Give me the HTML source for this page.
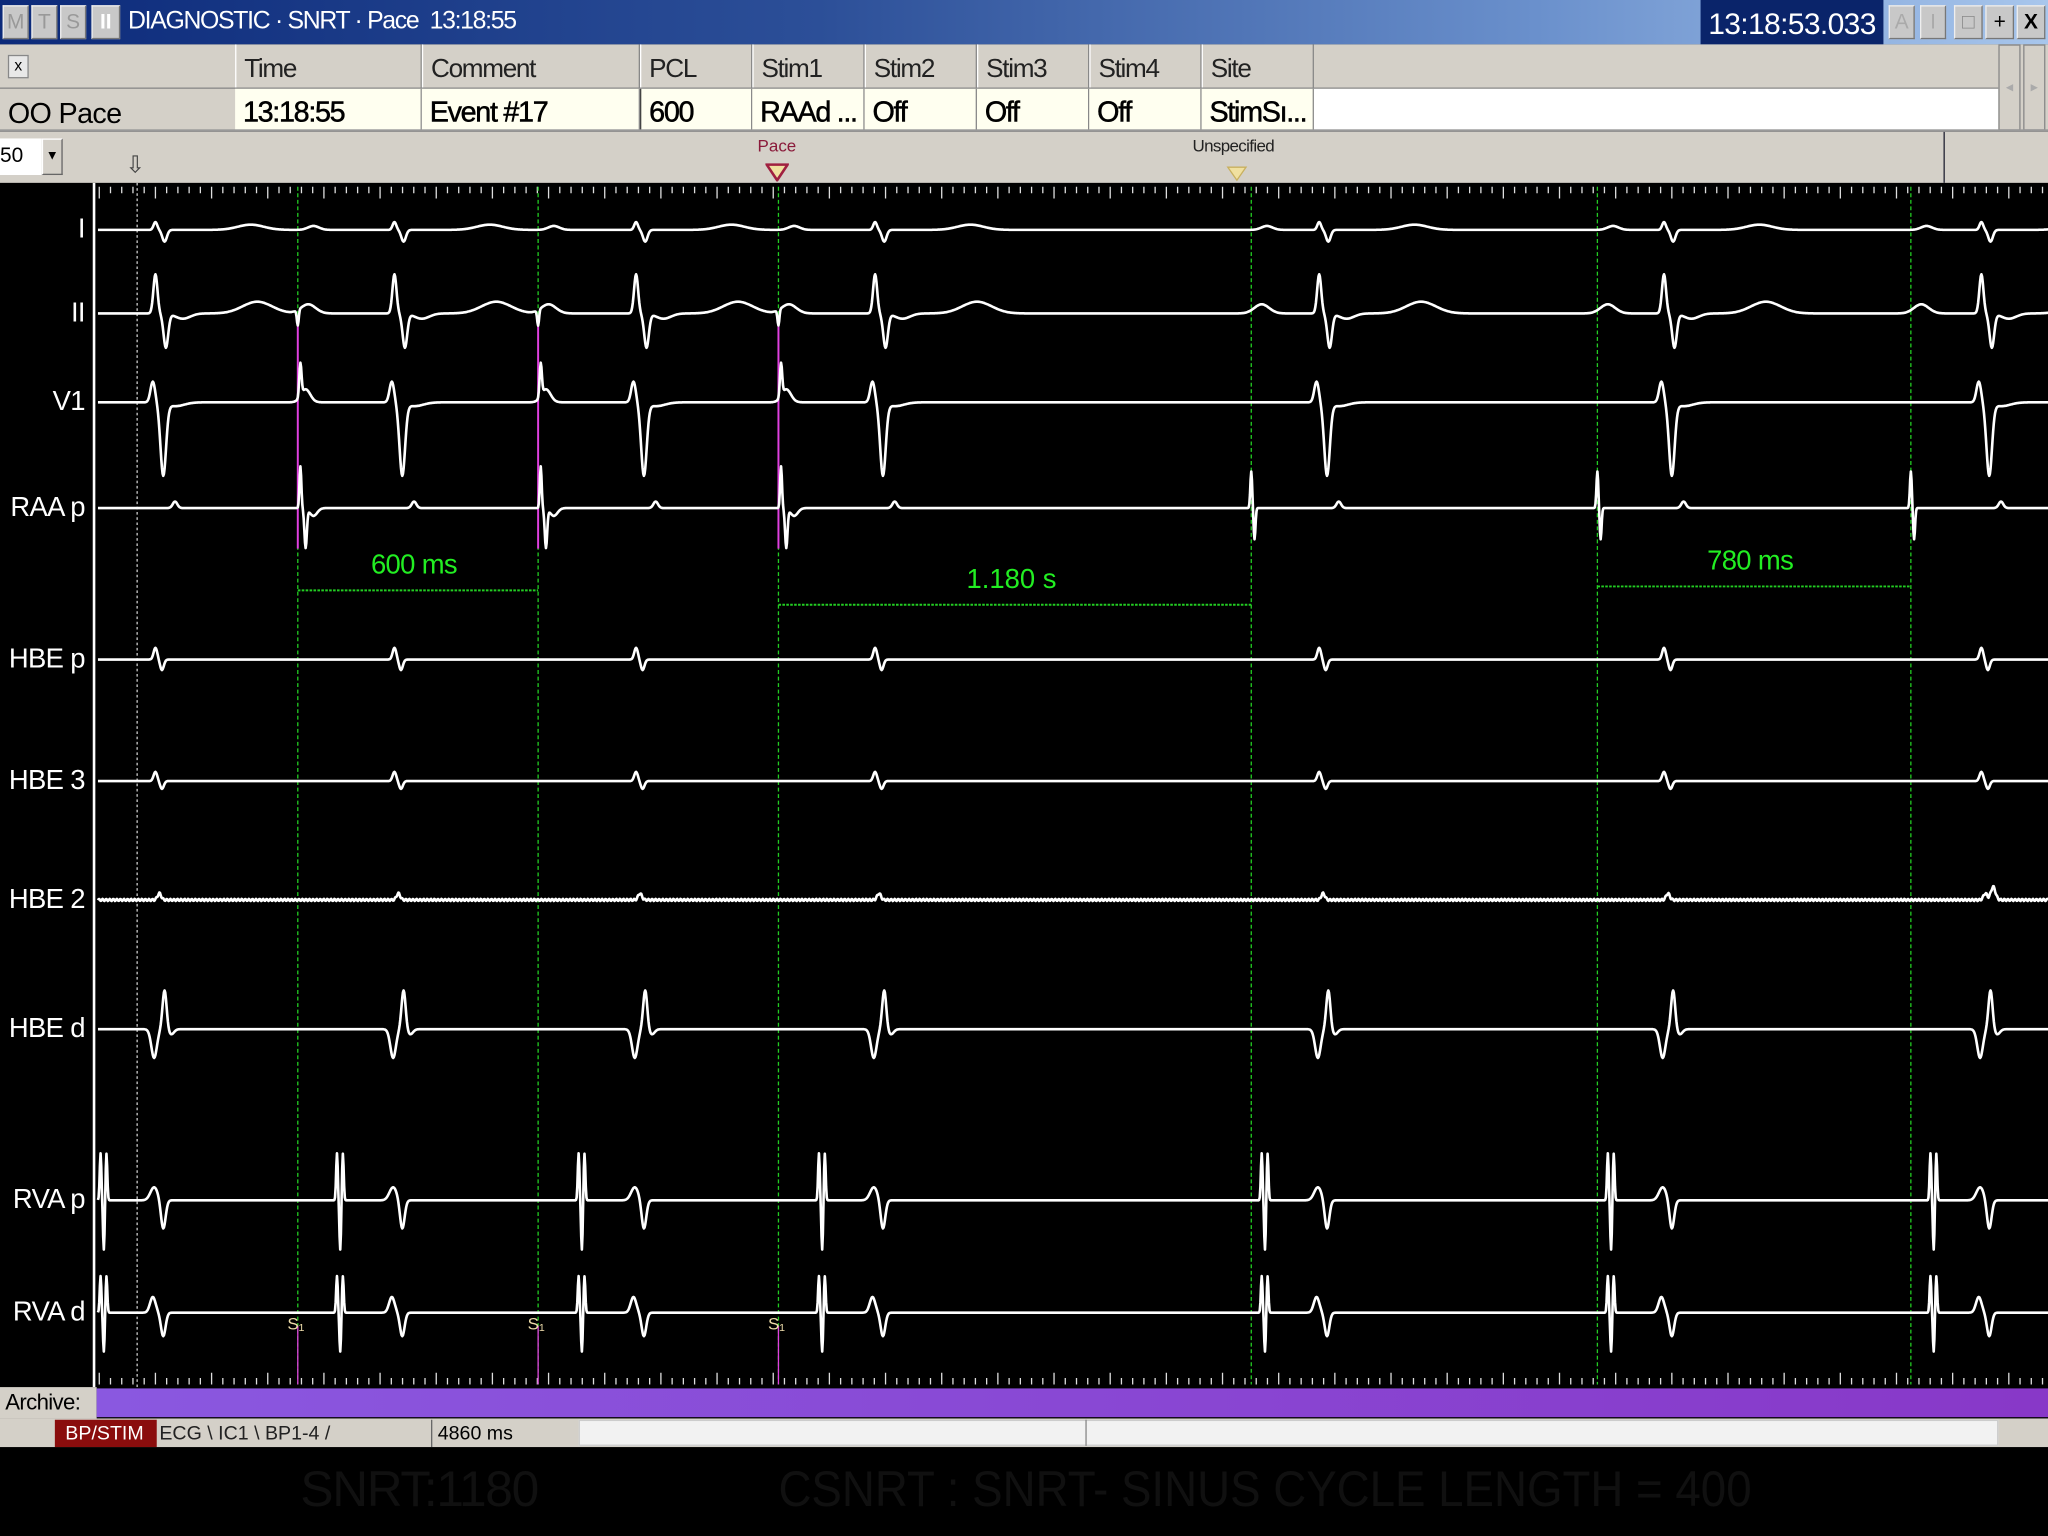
<!DOCTYPE html>
<html><head><meta charset="utf-8"><style>
html,body{margin:0;padding:0;background:#000;overflow:hidden}
#w{position:absolute;left:0;top:0;width:1568px;height:1176px;transform:scale(1.306122);transform-origin:0 0;font-family:"Liberation Sans",sans-serif;background:#000}
.a{position:absolute}
.g{background:#d4d0c8}
.btn{position:absolute;top:4px;height:26px;background:#c8c8c8;border:1px solid #eee;border-right-color:#777;border-bottom-color:#777;color:#999;font-size:16px;text-align:center;line-height:26px;box-sizing:border-box}
.hc{position:absolute;top:34px;height:34px;border-left:1px solid #fff;border-right:1px solid #888;box-sizing:border-box;font-size:20px;color:#222;padding-left:6px;line-height:38px;letter-spacing:-1px}
.dc{position:absolute;top:68px;height:32px;background:#fffff0;border-right:1px solid #888;box-sizing:border-box;font-size:22px;color:#000;padding-left:6px;line-height:36px;letter-spacing:-1px;-webkit-text-stroke:0.4px #000}
.lb{position:absolute;right:1503px;color:#fff;font-size:21px;white-space:nowrap;letter-spacing:-0.5px}
</style></head><body><div id="w">
<div class="a" style="left:0;top:0;width:1568px;height:34px;background:linear-gradient(90deg,#0c2a7a 0%,#2c4f98 40%,#6a90cc 75%,#a8c6ec 100%)"></div>
<div class="btn" style="left:2px;width:20px">M</div><div class="btn" style="left:24px;width:20px">T</div><div class="btn" style="left:46px;width:20px">S</div><div class="btn" style="left:70px;width:22px;color:#fff;font-weight:bold">II</div>
<div class="a" style="left:98px;top:6px;color:#fff;font-size:19px;letter-spacing:-1px">DIAGNOSTIC · SNRT · Pace&nbsp; 13:18:55</div>
<div class="a" style="left:1302px;top:0;width:140px;height:34px;background:#0a246a;color:#fff;font-size:23px;line-height:36px;text-align:center;letter-spacing:-0.5px">13:18:53.033</div>
<div class="btn" style="left:1446px;width:20px;color:#aaa">A</div><div class="btn" style="left:1470px;width:20px;color:#aaa">I</div><div class="btn" style="left:1496px;width:22px;color:#888">□</div><div class="btn" style="left:1520px;width:22px;color:#000">+</div><div class="btn" style="left:1544px;width:22px;color:#000;font-weight:bold">X</div>
<div class="a g" style="left:0;top:34px;width:1568px;height:66px"></div>
<div class="a" style="left:6px;top:42px;width:14px;height:16px;border:1px solid #888;background:#e8e8e8;font-size:12px;text-align:center;line-height:15px">x</div>
<div class="hc" style="left:180px;width:143px">Time</div><div class="hc" style="left:323px;width:167px">Comment</div><div class="hc" style="left:490px;width:86px">PCL</div><div class="hc" style="left:576px;width:86px">Stim1</div><div class="hc" style="left:662px;width:86px">Stim2</div><div class="hc" style="left:748px;width:86px">Stim3</div><div class="hc" style="left:834px;width:86px">Stim4</div><div class="hc" style="left:920px;width:86px">Site</div>
<div class="a" style="left:0;top:67px;width:1530px;height:1px;background:#888"></div>
<div class="a" style="left:6px;top:74px;font-size:22px;color:#000;letter-spacing:-0.5px">OO Pace</div>
<div class="dc" style="left:180px;width:143px">13:18:55</div><div class="dc" style="left:323px;width:167px">Event #17</div><div class="dc" style="left:490px;width:86px;border-left:1px solid #444">600</div><div class="dc" style="left:576px;width:86px">RAAd ...</div><div class="dc" style="left:662px;width:86px">Off</div><div class="dc" style="left:748px;width:86px">Off</div><div class="dc" style="left:834px;width:86px">Off</div><div class="dc" style="left:920px;width:86px">StimSı...</div>
<div class="a" style="left:1006px;top:68px;width:524px;height:32px;background:#fff"></div>
<div class="a" style="left:1530px;top:34px;width:17px;height:66px;background:#d4d0c8;border:1px solid #888;box-sizing:border-box;color:#aaa;font-size:11px;line-height:64px;text-align:center">◂</div>
<div class="a" style="left:1549px;top:34px;width:17px;height:66px;background:#d4d0c8;border:1px solid #888;box-sizing:border-box;color:#aaa;font-size:11px;line-height:64px;text-align:center">▸</div>
<div class="a" style="left:0;top:99px;width:1568px;height:2px;background:#999"></div>
<div class="a g" style="left:0;top:101px;width:1568px;height:39px"></div>
<div class="a" style="left:0;top:106px;width:32px;height:28px;background:#fff;font-size:16px;line-height:28px">50</div>
<div class="a" style="left:32px;top:106px;width:16px;height:28px;background:#d4d0c8;border:1px solid #fff;border-right-color:#666;border-bottom-color:#666;box-sizing:border-box;font-size:10px;text-align:center;line-height:26px">▼</div>
<div class="a" style="left:96px;top:116px;font-size:18px;color:#444">⇩</div>
<div class="a" style="left:580px;top:104px;font-size:13px;color:#8a1a3a">Pace</div>
<svg class="a" style="left:586px;top:125px" width="18" height="14"><polygon points="1,1 17,1 9,13" fill="#f0e0a0" stroke="#a02040" stroke-width="2"/></svg>
<div class="a" style="left:913px;top:104px;font-size:13px;color:#222;letter-spacing:-0.5px">Unspecified</div>
<svg class="a" style="left:939px;top:127px" width="16" height="12"><polygon points="1,1 15,1 8,11" fill="#f0e0a0" stroke="#c8b060"/></svg>
<div class="a" style="left:1488px;top:101px;width:1px;height:39px;background:#223"></div>
<svg id="sv" class="a" style="left:0;top:140px" width="1568" height="922" viewBox="0 140 1568 922"></svg>
<div class="lb" style="top:164px">I</div><div class="lb" style="top:228px">II</div><div class="lb" style="top:296px">V1</div><div class="lb" style="top:377px">RAA p</div><div class="lb" style="top:493px">HBE p</div><div class="lb" style="top:586px">HBE 3</div><div class="lb" style="top:677px">HBE 2</div><div class="lb" style="top:776px">HBE d</div><div class="lb" style="top:907px">RVA p</div><div class="lb" style="top:993px">RVA d</div>
<div class="a" style="left:284px;top:421px;color:#22ee22;font-size:21px;letter-spacing:-0.5px">600 ms</div>
<div class="a" style="left:740px;top:432px;color:#22ee22;font-size:21px">1.180 s</div>
<div class="a" style="left:1307px;top:418px;color:#22ee22;font-size:21px;letter-spacing:-0.5px">780 ms</div>
<div class="a g" style="left:0;top:1062px;width:74px;height:24px;font-size:17px;line-height:24px;padding-left:4px;box-sizing:border-box;letter-spacing:-0.5px">Archive:</div>
<div class="a" style="left:74px;top:1063px;width:1494px;height:22px;background:linear-gradient(90deg,#8a58e0,#8838c8)"></div>
<div class="a g" style="left:0;top:1086px;width:1568px;height:22px"></div>
<div class="a" style="left:42px;top:1087px;width:78px;height:21px;background:#8a0d0d;color:#fff;font-size:15px;line-height:21px;padding-left:8px;box-sizing:border-box">BP/STIM</div>
<div class="a" style="left:122px;top:1087px;font-size:15px;line-height:21px;color:#222">ECG \ IC1 \ BP1-4 /</div>
<div class="a" style="left:330px;top:1087px;width:72px;height:21px;font-size:15px;line-height:21px;border-left:1px solid #666">&nbsp;4860 ms</div>
<div class="a" style="left:443px;top:1087px;width:1087px;height:20px;background:#f2f2f2;border:1px solid #ccc;box-sizing:border-box"></div>
<div class="a" style="left:831px;top:1087px;width:1px;height:20px;background:#888"></div>
<div class="a" style="left:0;top:1108px;width:1568px;height:68px;background:#000"></div>
<div class="a" style="left:230px;top:1120px;color:#101010;font-size:38px;letter-spacing:-1px">SNRT:1180</div>
<div class="a" style="left:596px;top:1120px;color:#101010;font-size:38px;transform:scaleX(0.92);transform-origin:0 0;white-space:nowrap">CSNRT : SNRT- SINUS CYCLE LENGTH = 400</div>
</div>
<script>
var sv=document.getElementById('sv'),NS='http://www.w3.org/2000/svg';
function el(t,a){var e=document.createElementNS(NS,t);for(var k in a)e.setAttribute(k,a[k]);sv.appendChild(e);return e;}
var P=[228,412,596],S=[958,1223,1463],A=P.concat(S),V=[122,305,490,673,1013,1277,1520],R=[77,258,443,627,966,1231,1478];
var d='';for(var x=76;x<1568;x+=8.6){var h=(Math.round((x-76)/8.6)%5==0)?9:5;d+='M'+x.toFixed(1)+' 143v'+h+'M'+x.toFixed(1)+' 1060v-'+h;}
el('path',{d:d,stroke:'#ddd','stroke-width':1,fill:'none'});
el('line',{x1:72,y1:140,x2:72,y2:1062,stroke:'#fff','stroke-width':2});
el('line',{x1:105,y1:140,x2:105,y2:1062,stroke:'#ccc','stroke-width':1,'stroke-dasharray':'2 2'});
A.forEach(function(a){el('line',{x1:a,y1:143,x2:a,y2:1060,stroke:'#22cc22','stroke-width':1,'stroke-dasharray':'3 2'});});
P.forEach(function(a){el('line',{x1:a,y1:250,x2:a,y2:420,stroke:'#e040e0','stroke-width':1.5});el('line',{x1:a,y1:1015,x2:a,y2:1060,stroke:'#e040e0','stroke-width':1});
 var t=el('text',{x:a-8,y:1018,fill:'#eeddaa','font-size':13,'font-family':'Liberation Sans'});t.textContent='S₁';});
[[228,412,452],[596,958,463],[1223,1463,449]].forEach(function(m){el('line',{x1:m[0],y1:m[2],x2:m[1],y2:m[2],stroke:'#22cc22','stroke-width':1.5,'stroke-dasharray':'2 1'});});
function G(x,c,w){var t=(x-c)/w;return Math.exp(-t*t);}
var ch=[
[176,function(x){var y=0;V.forEach(function(v){y+=-6*G(x,v-3,2)+9*G(x,v+4,2.5)-4*G(x,v+70,14);});A.forEach(function(a){y+=-3*G(x,a+12,6);});return y;}],
[240,function(x){var y=0;V.forEach(function(v){y+=-30*G(x,v-3,2.2)+26*G(x,v+5,2.5)+4*G(x,v+18,8)-9*G(x,v+75,16);});A.forEach(function(a){y+=-7*G(x,a+8,8);});P.forEach(function(a){y+=12*G(x,a,1);});return y;}],
[308,function(x){var y=0;V.forEach(function(v){y+=-16*G(x,v-5,2.5)+55*G(x,v+3,3)+3*G(x,v+12,10);});P.forEach(function(a){y+=-25*G(x,a+2,1.2)-10*G(x,a+6,5);});return y;}],
[389,function(x){var y=0;P.forEach(function(a){y+=-32*G(x,a+2,1)+30*G(x,a+6,1.3)+6*G(x,a+12,4);});S.forEach(function(a){y+=-28*G(x,a,1)+24*G(x,a+2.5,1);});V.forEach(function(v){y+=-5*G(x,v+12,2.5);});return y;}],
[505,function(x){var y=0;V.forEach(function(v){y+=-9*G(x,v-3,2)+8*G(x,v+2,2);});return y;}],
[598,function(x){var y=0;V.forEach(function(v){y+=-7*G(x,v-3,2)+6*G(x,v+2,2);});return y;}],
[689,function(x){var y=0.8*Math.sin(x*2.3);V.forEach(function(v){y+=-5*G(x,v,2);});y+=-10*G(x,1526,2.5);return y;}],
[788,function(x){var y=0;V.forEach(function(v){y+=22*G(x,v-4,3)-30*G(x,v+4,2.2)+4*G(x,v+9,3);});return y;}],
[919,function(x){var y=0;R.forEach(function(r){y+=-36*G(x,r,0.9)+38*G(x,r+2.5,0.9)-36*G(x,r+4.5,0.9);});V.forEach(function(v){y+=-10*G(x,v-4,4)+22*G(x,v+3,2.5);});return y;}],
[1005,function(x){var y=0;R.forEach(function(r){y+=-28*G(x,r,0.9)+30*G(x,r+2.5,0.9)-28*G(x,r+4.5,0.9);});V.forEach(function(v){y+=-12*G(x,v-5,3)+18*G(x,v+3,2.5);});return y;}]
];
ch.forEach(function(c){var s='';for(var x=75;x<=1568;x+=0.5){var y=c[0]+c[1](x);s+=(x==75?'M':'L')+x+' '+y.toFixed(1);}el('path',{d:s,stroke:'#fff','stroke-width':2,fill:'none','stroke-linejoin':'round'});});
</script>
</body></html>
